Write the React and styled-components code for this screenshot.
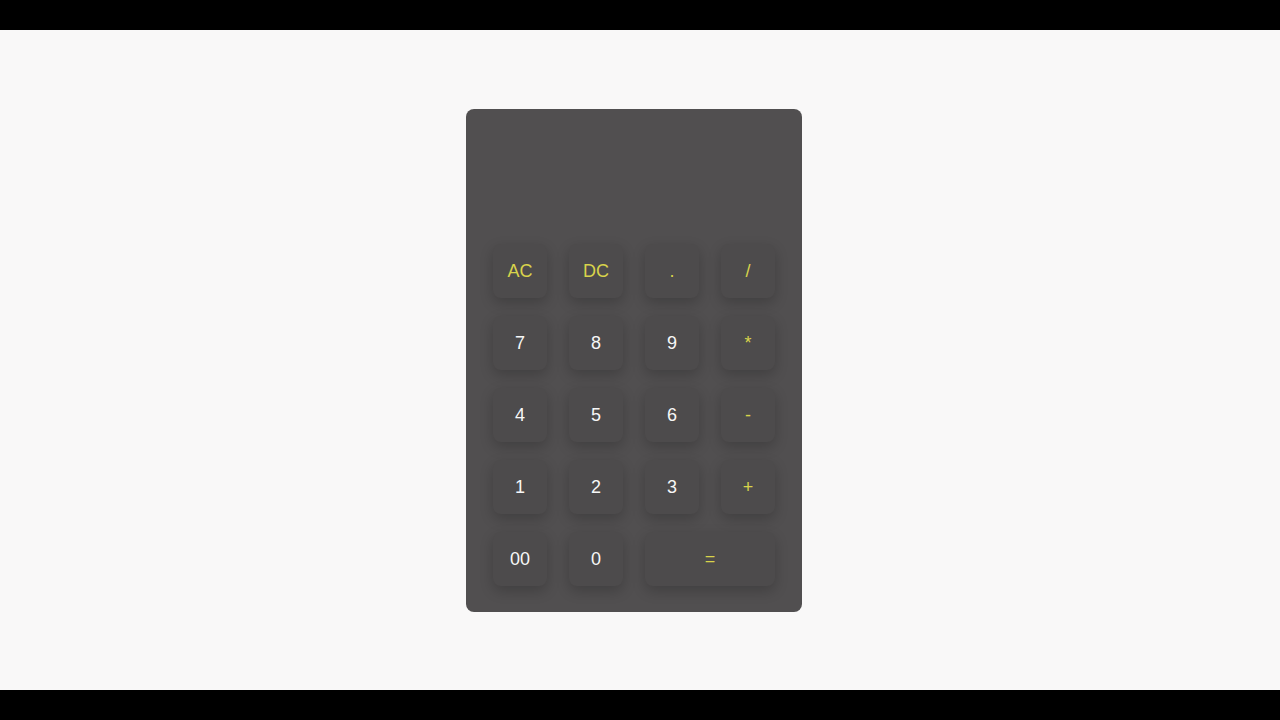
import React from "react";
import styled, { createGlobalStyle } from "styled-components";

const GlobalStyle = createGlobalStyle`
  * { box-sizing: border-box; }
  body {
    margin: 0;
    font-family: "Liberation Sans", Arial, sans-serif;
    background: #000;
  }
`;

const keys = [
  { label: "AC", op: true },
  { label: "DC", op: true },
  { label: ".", op: true },
  { label: "/", op: true },
  { label: "7" },
  { label: "8" },
  { label: "9" },
  { label: "*", op: true },
  { label: "4" },
  { label: "5" },
  { label: "6" },
  { label: "-", op: true },
  { label: "1" },
  { label: "2" },
  { label: "3" },
  { label: "+", op: true },
  { label: "00" },
  { label: "0" },
  { label: "=", op: true, wide: true },
];

const App = () => {
  return (
    <Page>
      <GlobalStyle />
      <Letterbox />
      <Stage>
        <Calculator>
          <Display />
          <Keypad>
            {keys.map((k) => (
              <Key key={k.label} $op={k.op} $wide={k.wide}>
                {k.label}
              </Key>
            ))}
          </Keypad>
        </Calculator>
      </Stage>
      <Letterbox />
    </Page>
  );
};

const Page = styled.div`
  width: 1280px;
  height: 720px;
  display: flex;
  flex-direction: column;
`;

const Letterbox = styled.div`
  height: 30px;
  background: #000;
`;

const Stage = styled.main`
  flex: 1;
  background: #f9f8f8;
  display: flex;
  align-items: center;
  justify-content: center;
  padding-right: 12px;
`;

const Calculator = styled.div`
  width: 336px;
  height: 503px;
  background: #514f50;
  border-radius: 8px;
  padding: 0 27px 26px;
  display: flex;
  flex-direction: column;
`;

const Display = styled.div`
  height: 135px;
`;

const Keypad = styled.div`
  display: grid;
  grid-template-columns: repeat(4, 54px);
  grid-auto-rows: 54px;
  column-gap: 22px;
  row-gap: 18px;
`;

const Key = styled.button`
  grid-column: ${({ $wide }) => ($wide ? "span 2" : "auto")};
  border: none;
  border-radius: 8px;
  background: #4d4b4c;
  box-shadow: 0 5px 14px rgba(0, 0, 0, 0.2);
  color: ${({ $op }) => ($op ? "#d8d34b" : "#f7f7f7")};
  font-family: "Liberation Sans", Arial, sans-serif;
  font-size: 18px;
  padding: 2px 0 0;
  cursor: pointer;
`;

export default App;
